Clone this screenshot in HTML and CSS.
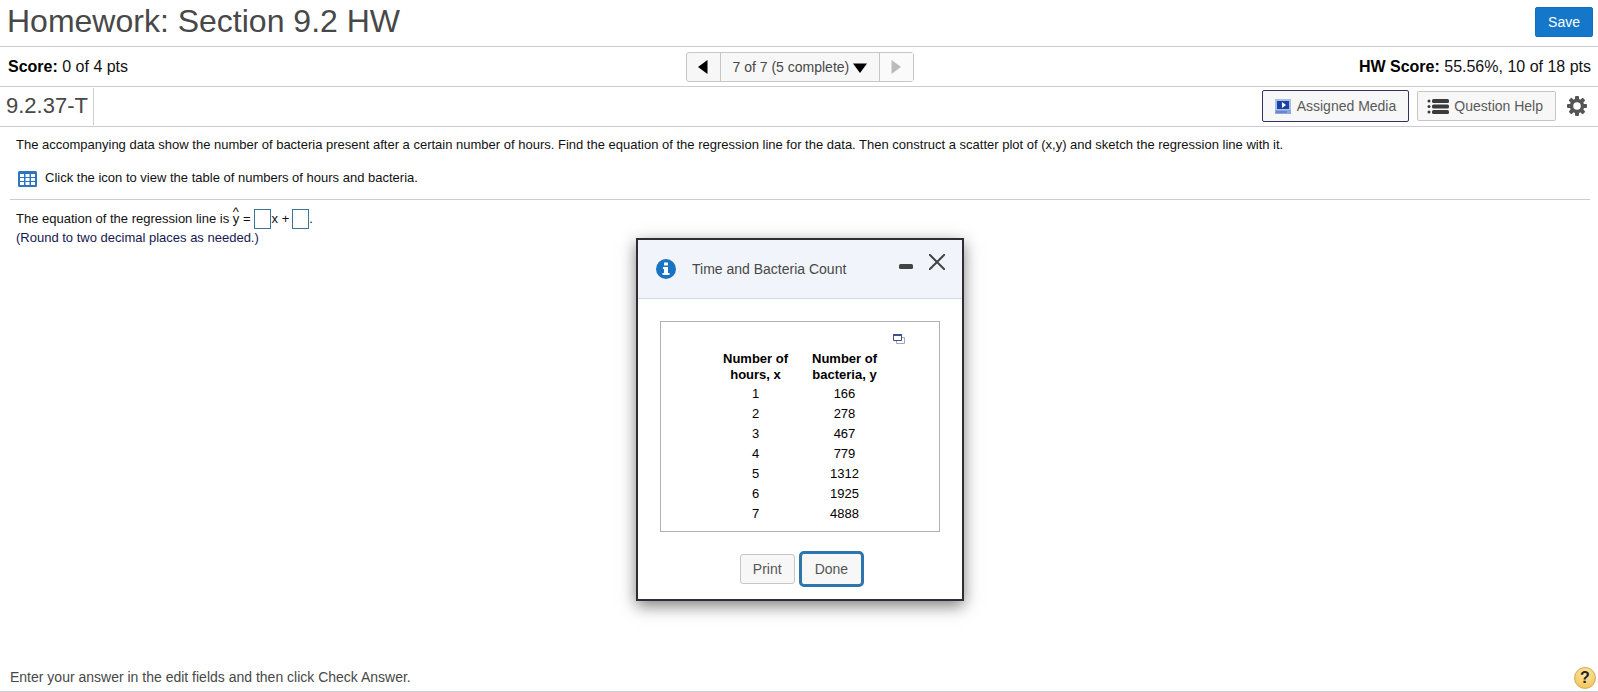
FILE: index.html
```html
<!DOCTYPE html>
<html lang="en">
<head>
<meta charset="utf-8">
<title>Homework: Section 9.2 HW</title>
<link rel="stylesheet" href="styles.css">
</head>
<body>
<div class="page">
  <header class="title-bar">
    <h1 class="title">Homework: Section 9.2 HW</h1>
    <button class="save" type="button">Save</button>
  </header>

  <div class="score-bar">
    <p class="score"><strong>Score:</strong> 0 of 4 pts</p>
    <nav class="pager" aria-label="Questions">
      <button class="pager-step" type="button" aria-label="Previous question">
        <svg width="10" height="14" viewBox="0 0 10 14"><path d="M9.500 0v14L0 7z" fill="#000"/></svg>
      </button>
      <span class="pager-pick">
        <select class="pager-select" aria-label="Question"><option>7 of 7 (5 complete)</option></select>
        <svg class="pager-arrow" width="14" height="10" viewBox="0 0 14 10"><path d="M0 .5h14L7 10z" fill="#000"/></svg>
      </span>
      <button class="pager-step pager-off" type="button" aria-label="Next question" disabled>
        <svg width="10" height="14" viewBox="0 0 10 14"><path d="M.5 0v14L10 7z" fill="#bbb"/></svg>
      </button>
    </nav>
    <p class="score score-total"><strong>HW Score:</strong> 55.56%, 10 of 18 pts</p>
  </div>

  <div class="tool-bar">
    <h2 class="question-id">9.2.37-T</h2>
    <div class="tools">
      <button class="tool tool-active" type="button">
        <svg width="16" height="15" viewBox="0 0 16 15"><path d="M0 0h16v15H0z" fill="#a9bfe6"/><path d="M2 2h12v8H2z" fill="#1c40a8"/><path d="M7 3l4 3-4 3z" fill="#fff"/><path d="M0 11h16v4H0z" fill="#8ba6d8"/><path d="M1 13h11" stroke="#4568b4"/></svg>
        Assigned Media
      </button>
      <button class="tool" type="button">
        <svg width="22" height="15" viewBox="0 0 22 15" fill="#3b3b3b"><circle cx="2" cy="2" r="1.500"/><circle cx="2" cy="7.500" r="1.500"/><circle cx="2" cy="13" r="1.500"/><rect x="5" width="17" height="4" rx="1.500"/><rect x="5" y="5.500" width="17" height="4" rx="1.500"/><rect x="5" y="11" width="17" height="4" rx="1.500"/></svg>
        Question Help
      </button>
      <button class="gear" type="button" aria-label="Settings">
        <svg width="20" height="20" viewBox="0 0 20 20"><g fill="#555"><g id="teeth"><rect x="8" y="0" width="4" height="20" rx="1"/><rect x="0" y="8" width="20" height="4" rx="1"/></g><use href="#teeth" transform="rotate(45 10 10)"/></g><circle cx="10" cy="10" r="5.500" fill="#fff" stroke="#555" stroke-width="3.500"/></svg>
      </button>
    </div>
  </div>

  <main class="work">
    <section class="problem">
      <p>The accompanying data show the number of bacteria present after a certain number of hours. Find the equation of the regression line for the data. Then construct a scatter plot of (x,y) and sketch the regression line with it.</p>
      <div class="data-link">
        <button class="table-button" type="button" aria-label="View data table">
          <svg width="19" height="16" viewBox="0 0 19 16"><rect width="19" height="16" rx="1.500" fill="#2f74bf"/><path d="M2 3h4v3H2zM7.500 3h4v3h-4zM13 3h4v3h-4zM2 7h4v3H2zM7.500 7h4v3h-4zM13 7h4v3h-4zM2 11h4v3H2zM7.500 11h4v3h-4zM13 11h4v3h-4z" fill="#fff"/></svg>
        </button>
        <p>Click the icon to view the table of numbers of hours and bacteria.</p>
      </div>
    </section>
    <section class="answer">
      <div class="equation">
        <span>The equation of the regression line is <span class="hat">y</span> =</span>
        <input class="blank" type="text" aria-label="Slope">
        <span class="term">x +</span>
        <input class="blank" type="text" aria-label="Intercept"><span>.</span>
      </div>
      <p class="hint">(Round to two decimal places as needed.)</p>
    </section>
  </main>

  <footer class="footer">
    <p>Enter your answer in the edit fields and then click Check Answer.</p>
    <button class="help" type="button" aria-label="Help">?</button>
  </footer>
</div>

<div class="overlay">
  <div class="dialog" role="dialog" aria-labelledby="dialog-title">
    <div class="dialog-head">
      <svg width="20" height="20" viewBox="0 0 20 20"><circle cx="10" cy="10" r="10" fill="#1873c0"/><path d="M8 3.500h4v3H8zM7 8h5v6h1.500v2H6.500v-2H8v-4H7z" fill="#fff"/></svg>
      <h3 class="dialog-title" id="dialog-title">Time and Bacteria Count</h3>
      <button class="dialog-icon minimize" type="button" aria-label="Minimize">
        <svg width="14" height="5" viewBox="0 0 14 5"><rect width="14" height="5" rx="1.500" fill="#444"/></svg>
      </button>
      <button class="dialog-icon" type="button" aria-label="Close">
        <svg width="16" height="16" viewBox="0 0 16 16"><path d="M0 0l16 16M16 0L0 16" stroke="#444" stroke-width="2"/></svg>
      </button>
    </div>
    <div class="dialog-body">
      <div class="data-box">
        <button class="pop-out" type="button" aria-label="Open in a new window">
          <svg width="12" height="10" viewBox="0 0 12 10" fill="none"><path d="M3.500 3.500h8v6h-8z" stroke="#a3a6bd"/><path d="M.5.5h8v6h-8z" fill="#fff" stroke="#424f86"/><path d="M0 1h9" stroke="#424f86" stroke-width="2"/></svg>
        </button>
        <table class="data">
          <thead><tr><th>Number of<br>hours, x</th><th>Number of<br>bacteria, y</th></tr></thead>
          <tbody>
            <tr><td>1</td><td>166</td></tr>
            <tr><td>2</td><td>278</td></tr>
            <tr><td>3</td><td>467</td></tr>
            <tr><td>4</td><td>779</td></tr>
            <tr><td>5</td><td>1312</td></tr>
            <tr><td>6</td><td>1925</td></tr>
            <tr><td>7</td><td>4888</td></tr>
          </tbody>
        </table>
      </div>
      <div class="dialog-actions">
        <button class="action" type="button">Print</button>
        <button class="action action-main" type="button">Done</button>
      </div>
    </div>
  </div>
</div>
</body>
</html>
```
FILE: styles.css
```css
* {
  box-sizing: border-box;
}

body {
  margin: 0;
  background: #fff;
  color: #111;
  font: 13px/18px "Liberation Sans", Arial, sans-serif;
}

h1, h2, h3, p {
  margin: 0;
  font-weight: normal;
}

button, select, input {
  margin: 0;
  font: inherit;
}

svg {
  display: block;
  flex: none;
}

.page {
  display: flex;
  flex-direction: column;
  min-height: 100vh;
}

/* Top bars */
.title-bar,
.score-bar,
.tool-bar {
  border-bottom: 1px solid #c9cdcf;
}

.title-bar {
  display: flex;
  align-items: center;
  justify-content: space-between;
  height: 47px;
  padding: 0 5px 2px 7px;
}

.title {
  padding-bottom: 2px;
  color: #484848;
  font-size: 32px;
  line-height: 36px;
}

.save {
  height: 30px;
  padding: 0 12px;
  border: 1px solid #0f6fc0;
  border-radius: 2px;
  background: #1577c9;
  color: #fff;
  font-size: 14px;
}

.score-bar {
  display: grid;
  grid-template-columns: 1fr auto 1fr;
  align-items: center;
  height: 40px;
  padding: 0 7px 0 8px;
}

.score {
  color: #111;
  font-size: 16px;
}

.score strong {
  color: #000;
}

.score-total {
  text-align: right;
}

.pager {
  display: flex;
  height: 30px;
  border: 1px solid #c6c6c6;
  border-radius: 3px;
  background: #f7f7f7;
}

.pager-step {
  display: grid;
  place-items: center;
  width: 33px;
  padding: 1px 0 0;
  border: 0;
  background: none;
}

.pager-off {
  background: #fafafa;
}

.pager-pick {
  position: relative;
  display: flex;
  border: solid #c6c6c6;
  border-width: 0 1px;
}

.pager-select {
  padding: 0 29px 0 12px;
  border: 0;
  appearance: none;
  background: none;
  color: #484848;
  font-size: 14px;
}

.pager-arrow {
  position: absolute;
  top: 10px;
  right: 12px;
  pointer-events: none;
}

.tool-bar {
  display: flex;
  justify-content: space-between;
  height: 40px;
  padding: 1px 11px 1px 6px;
}

.question-id {
  padding-right: 5px;
  border-right: 1px solid #c9cdcf;
  color: #484848;
  font-size: 22px;
  line-height: 36px;
}

.tools {
  display: flex;
  align-items: center;
  gap: 8px;
  padding-bottom: 1px;
}

.tool {
  display: flex;
  align-items: center;
  gap: 5px;
  height: 30px;
  padding: 0 12px 0 9px;
  border: 1px solid #c6c6c6;
  border-radius: 2px;
  background: #f7f7f7;
  color: #5a5a5a;
  font-size: 14px;
}

.tool-active {
  gap: 6px;
  height: 32px;
  padding: 0 12px;
  border-color: #30345c;
}

.gear {
  margin-left: 3px;
  padding: 0;
  border: 0;
  background: none;
}

/* Question */
.work {
  flex: 1;
  padding: 9px 8px 0 10px;
}

.problem {
  padding: 0 6px 12px;
  border-bottom: 1px solid #c9cdcf;
}

.data-link {
  display: flex;
  align-items: center;
  gap: 8px;
  padding: 15px 0 0 2px;
}

.table-button {
  padding: 2px 0 0;
  border: 0;
  background: none;
}

.answer {
  padding: 9px 6px;
}

.equation {
  display: flex;
  align-items: center;
  height: 20px;
}

.hat {
  position: relative;
}

.hat::before {
  content: "^";
  position: absolute;
  top: -8px;
  left: 0;
}

.blank {
  width: 17px;
  height: 20px;
  margin-left: 3px;
  padding: 0;
  border: 1px solid #3a7597;
  background: #fff;
  text-align: center;
}

.term {
  padding-left: 1px;
}

.hint {
  color: #17174f;
}

/* Footer */
.footer {
  display: flex;
  align-items: center;
  justify-content: space-between;
  padding: 0 2px 2px 10px;
  border-bottom: 1px solid #c9cdcf;
  color: #484848;
  font-size: 14px;
}

.footer p {
  padding-bottom: 2px;
}

.help {
  width: 22px;
  height: 22px;
  padding: 0;
  border: 1px solid #cfae5c;
  border-radius: 50%;
  background: radial-gradient(circle at 50% 30%, #ffe9a4, #efbd49);
  color: #222;
  font-size: 16px;
  font-weight: bold;
}

/* Dialog */
.overlay {
  position: absolute;
  top: 238px;
  right: 0;
  left: 0;
  display: flex;
  justify-content: center;
  padding-left: 2px;
  pointer-events: none;
}

.dialog {
  width: 328px;
  border: 2px solid #2c2e31;
  background: #fff;
  box-shadow: 0 5px 15px rgba(0, 0, 0, .5);
  pointer-events: auto;
}

.dialog-head {
  display: flex;
  align-items: center;
  height: 59px;
  padding: 0 17px 0 18px;
  border-bottom: 1px solid #cfdbe4;
  background: #f1f5fb;
}

.dialog-title {
  flex: 1;
  padding-left: 16px;
  color: #484848;
  font-size: 14px;
}

.dialog-icon {
  padding: 0 0 14px;
  border: 0;
  background: none;
}

.minimize {
  padding: 0 16px 6px 0;
}

.dialog-body {
  padding: 22px;
  padding-bottom: 12px;
}

.data-box {
  display: flex;
  flex-direction: column;
  align-items: center;
  height: 211px;
  border: 1px solid #b1b1b1;
}

.pop-out {
  align-self: flex-end;
  margin: 12px 34px 6px;
  padding: 0;
  border: 0;
  background: none;
}

.data {
  border-collapse: collapse;
  color: #000;
  text-align: center;
}

.data th {
  height: 34px;
  padding: 0 12px 1px;
  line-height: 16px;
}

.data td {
  height: 20px;
  padding: 1px 0;
}

.dialog-actions {
  display: flex;
  align-items: center;
  justify-content: center;
  gap: 4px;
  padding: 19px 0 0 4px;
}

.action {
  height: 30px;
  padding: 0 12px;
  border: 1px solid #c6c6c6;
  border-radius: 3px;
  background: #f7f7f7;
  color: #555;
  font-size: 14px;
}

.action-main {
  height: 36px;
  padding: 0 13px;
  border: 3px solid #2c75ad;
  border-radius: 5px;
}
```
